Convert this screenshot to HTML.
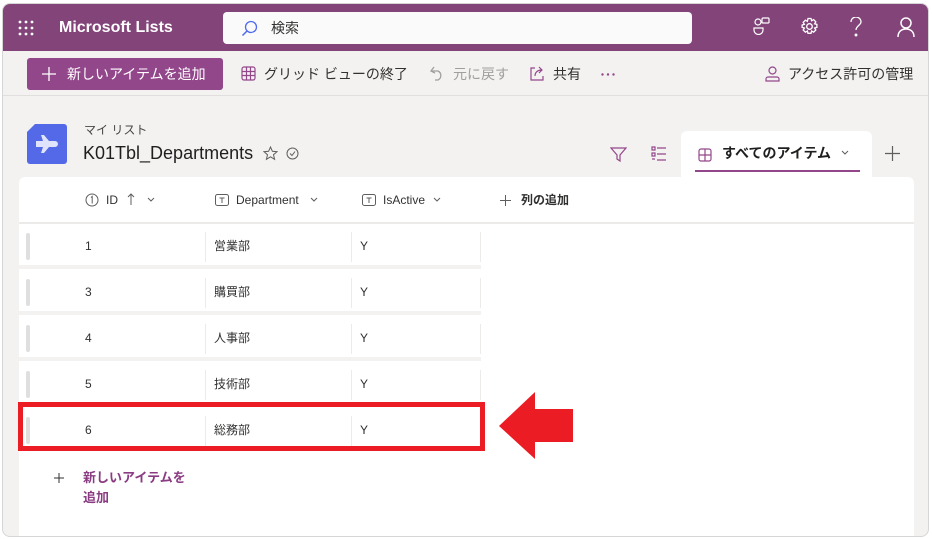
<!DOCTYPE html>
<html><head><meta charset="utf-8"><style>
*{box-sizing:border-box;margin:0;padding:0}
body{width:932px;height:539px;background:#fff;font-family:"Segoe UI","Liberation Sans","Noto Sans CJK JP",sans-serif;position:relative;overflow:hidden;color:#323130}
.win{position:absolute;left:2px;top:3px;width:927px;height:534px;background:#f3f2f1;border:1px solid #d6d6d6;border-radius:8px;overflow:hidden}
.top{position:absolute;left:0;top:0;width:100%;height:47px;background:#834479}
.a{position:absolute;white-space:nowrap}
.search{position:absolute;left:220px;top:8px;width:469px;height:32px;background:#fafafa;border-radius:4px}
.btn{position:absolute;left:24px;top:54px;width:196px;height:32px;background:#93478b;border-radius:3px;color:#fff;font-size:14px}
.cmd{font-size:14px;color:#323130;line-height:20px}
.card{position:absolute;left:16px;top:173px;width:895px;height:370px;background:#fff;border-radius:6px}
.hdr{font-size:12px;color:#323130;line-height:16px}
.row{position:absolute;left:0;width:462px;height:45px;border-bottom:4px solid #f3f2f1}
.row .h{position:absolute;left:7px;top:9px;width:4px;height:27px;background:#e1dfdd;border-radius:2px}
.row .c{position:absolute;font-size:12px;top:14px;line-height:16px}
.row .s{position:absolute;top:8px;width:1px;height:30px;background:#edebe9}
</style></head><body>
<div class="win">
 <div class="top">
  <svg class="a" style="left:15px;top:16px" width="16" height="16"><g fill="#fff"><circle cx="2" cy="2" r="1.4"/><circle cx="8" cy="2" r="1.4"/><circle cx="14" cy="2" r="1.4"/><circle cx="2" cy="8" r="1.4"/><circle cx="8" cy="8" r="1.4"/><circle cx="14" cy="8" r="1.4"/><circle cx="2" cy="14" r="1.4"/><circle cx="8" cy="14" r="1.4"/><circle cx="14" cy="14" r="1.4"/></g></svg>
  <div class="a" style="left:56px;top:14px;color:#fff;font-size:16px;font-weight:bold;line-height:20px">Microsoft Lists</div>
  <div class="search">
   <svg class="a" style="left:18px;top:8px" width="17" height="17"><circle cx="10" cy="7" r="5.5" fill="none" stroke="#4f6bed" stroke-width="1.3"/><path d="M6 11L1.5 15.5" stroke="#4f6bed" stroke-width="1.5"/></svg>
   <div class="a" style="left:48px;top:6px;font-size:14px;color:#323130;line-height:20px">検索</div>
  </div>
  <svg class="a" style="left:750px;top:13px" width="18" height="18" fill="none" stroke="#fff" stroke-width="1.2"><circle cx="5" cy="5" r="3"/><rect x="9" y="1" width="7" height="5" rx="1"/><path d="M1 11h9v2a4 4 0 0 1-9 0z"/></svg>
  <svg class="a" style="left:797px;top:13px" width="19" height="19" fill="none" stroke="#fff" stroke-width="1.3"><circle cx="9.5" cy="9.5" r="2.8"/><path d="M8 1.5h3l.6 2.3 2-1.2 2.2 2.2-1.2 2 2.3.6v3l-2.3.6 1.2 2-2.2 2.2-2-1.2-.6 2.3H8l-.6-2.3-2 1.2-2.2-2.2 1.2-2-2.3-.6V8l2.3-.6-1.2-2 2.2-2.2 2 1.2z"/></svg>
  <svg class="a" style="left:847px;top:13px" width="12" height="20" fill="none" stroke="#fff" stroke-width="1.3"><path d="M1 5a5 5 0 0 1 10 0c0 3-5 4-5 8"/><circle cx="6" cy="18" r=".8" fill="#fff"/></svg>
  <svg class="a" style="left:893px;top:12px" width="20" height="22" fill="none" stroke="#fff" stroke-width="1.5"><circle cx="10" cy="7" r="5"/><path d="M2 21c0-5 3-8 8-8s8 3 8 8"/></svg>
 </div>
 <div class="a" style="left:0;top:91px;width:100%;height:1px;background:#e1dfdd"></div>
 <div class="btn"><svg class="a" style="left:15px;top:9px" width="14" height="14" stroke="#fff" stroke-width="1.3"><path d="M7 0v14M0 7h14"/></svg><span class="a" style="left:40px;top:6px;line-height:20px">新しいアイテムを追加</span></div>
 <svg class="a" style="left:238px;top:62px" width="15" height="15" fill="none" stroke="#93478b" stroke-width="1.2"><rect x="1" y="1" width="13" height="13" rx="2"/><path d="M1 5.5h13M1 9.5h13M5.5 1v13M9.5 1v13"/></svg>
 <div class="a cmd" style="left:261px;top:60px">グリッド ビューの終了</div>
 <svg class="a" style="left:427px;top:62px" width="15" height="15" fill="none" stroke="#a19f9d" stroke-width="1.3"><path d="M4 1L1 5l4 2M1 5h7a5 5 0 0 1 0 9H5"/></svg>
 <div class="a cmd" style="left:450px;top:60px;color:#a19f9d">元に戻す</div>
 <svg class="a" style="left:526px;top:62px" width="15" height="15" fill="none" stroke="#93478b" stroke-width="1.2"><path d="M6 2H2v12h12v-4"/><path d="M6 10c0-4 3-6 7-6M10 1l3 3-3 3"/></svg>
 <div class="a cmd" style="left:550px;top:60px">共有</div>
 <svg class="a" style="left:598px;top:69px" width="14" height="3" fill="#93478b"><circle cx="1.5" cy="1.5" r="1.2"/><circle cx="7" cy="1.5" r="1.2"/><circle cx="12.5" cy="1.5" r="1.2"/></svg>
 <svg class="a" style="left:762px;top:62px" width="15" height="16" fill="none" stroke="#93478b" stroke-width="1.2"><circle cx="7.5" cy="4.5" r="3.5"/><path d="M1 15v-2a2 2 0 0 1 2-2h9a2 2 0 0 1 2 2v2z"/></svg>
 <div class="a cmd" style="left:785px;top:60px">アクセス許可の管理</div>

 <svg class="a" style="left:24px;top:120px" width="40" height="40"><path d="M8 0H37a3 3 0 0 1 3 3V37a3 3 0 0 1-3 3H3a3 3 0 0 1-3-3V8z" fill="#5469e8"/><path d="M9 17h7l-2-6h3l5 6h6a3 3 0 0 1 0 6h-6l-5 6h-3l2-6H9z" fill="#dfe3fb"/></svg>
 <div class="a" style="left:81px;top:118px;font-size:12px;color:#484644;line-height:16px">マイ リスト</div>
 <div class="a" style="left:80px;top:137px;font-size:18px;color:#201f1e;line-height:24px">K01Tbl_Departments</div>
 <svg class="a" style="left:260px;top:142px" width="15" height="15" fill="none" stroke="#605e5c"><path d="M7.5 1l1.9 4.3 4.6.4-3.5 3 1.1 4.6-4.1-2.5-4.1 2.5 1.1-4.6-3.5-3 4.6-.4z"/></svg>
 <svg class="a" style="left:283px;top:143px" width="13" height="13" fill="none" stroke="#605e5c"><circle cx="6.5" cy="6.5" r="5.5"/><path d="M4 6.5l2 2 3-4"/></svg>

 <svg class="a" style="left:607px;top:142px" width="17" height="17" fill="none" stroke="#93478b" stroke-width="1.2"><path d="M1 2h15l-6 7v6l-3-2V9z"/></svg>
 <svg class="a" style="left:648px;top:142px" width="16" height="16" fill="none" stroke="#93478b" stroke-width="1.2"><path d="M6 2h9M6 8h9M6 14h9M1 1h3v3H1zM1 7h3v3H1zM1 13h3"/></svg>
 <div class="a" style="left:678px;top:127px;width:191px;height:50px;background:#fff;border-radius:6px 6px 0 0"></div>
 <svg class="a" style="left:695px;top:144px" width="14" height="14" fill="none" stroke="#93478b" stroke-width="1.2"><rect x="1" y="1" width="12" height="12" rx="2"/><path d="M1 7h12M7 1v12"/></svg>
 <div class="a" style="left:719px;top:139px;font-size:14px;font-weight:bold;color:#201f1e;line-height:20px">すべてのアイテム</div>
 <svg class="a" style="left:838px;top:146px" width="8" height="5" fill="none" stroke="#605e5c"><path d="M1 1l3 3 3-3"/></svg>
 <div class="a" style="left:692px;top:166px;width:165px;height:2px;background:#93478b"></div>
 <svg class="a" style="left:882px;top:142px" width="15" height="15" stroke="#605e5c" stroke-width="1.2"><path d="M7.5 0v15M0 7.5h15"/></svg>

 <div class="card">
  <svg class="a" style="left:66px;top:16px" width="14" height="14" fill="none" stroke="#605e5c"><circle cx="7" cy="7" r="6"/><path d="M6 4.5l1.2-1V10.5"/></svg>
  <div class="a hdr" style="left:87px;top:15px">ID</div>
  <svg class="a" style="left:108px;top:16px" width="8" height="12" fill="none" stroke="#605e5c"><path d="M4 12V1M1 4l3-3 3 3"/></svg>
  <svg class="a" style="left:128px;top:20px" width="8" height="5" fill="none" stroke="#605e5c"><path d="M1 1l3 3 3-3"/></svg>
  <svg class="a" style="left:196px;top:17px" width="14" height="12" fill="none" stroke="#605e5c"><rect x=".5" y=".5" width="13" height="11" rx="2"/><path d="M4.5 4h5M7 4v5"/></svg>
  <div class="a hdr" style="left:217px;top:15px">Department</div>
  <svg class="a" style="left:291px;top:20px" width="8" height="5" fill="none" stroke="#605e5c"><path d="M1 1l3 3 3-3"/></svg>
  <svg class="a" style="left:343px;top:17px" width="14" height="12" fill="none" stroke="#605e5c"><rect x=".5" y=".5" width="13" height="11" rx="2"/><path d="M4.5 4h5M7 4v5"/></svg>
  <div class="a hdr" style="left:364px;top:15px">IsActive</div>
  <svg class="a" style="left:414px;top:20px" width="8" height="5" fill="none" stroke="#605e5c"><path d="M1 1l3 3 3-3"/></svg>
  <svg class="a" style="left:481px;top:18px" width="11" height="11" stroke="#605e5c"><path d="M5.5 0v11M0 5.5h11"/></svg>
  <div class="a hdr" style="left:502px;top:15px;font-weight:bold">列の追加</div>
  <div class="a" style="left:0;top:45px;width:895px;height:2px;background:#edebe9"></div>

  <div class="row" style="top:47px"><div class="h"></div><div class="c" style="left:66px">1</div><div class="s" style="left:186px"></div><div class="c" style="left:195px">営業部</div><div class="s" style="left:332px"></div><div class="c" style="left:341px">Y</div><div class="s" style="left:461px"></div></div>
  <div class="row" style="top:93px"><div class="h"></div><div class="c" style="left:66px">3</div><div class="s" style="left:186px"></div><div class="c" style="left:195px">購買部</div><div class="s" style="left:332px"></div><div class="c" style="left:341px">Y</div><div class="s" style="left:461px"></div></div>
  <div class="row" style="top:139px"><div class="h"></div><div class="c" style="left:66px">4</div><div class="s" style="left:186px"></div><div class="c" style="left:195px">人事部</div><div class="s" style="left:332px"></div><div class="c" style="left:341px">Y</div><div class="s" style="left:461px"></div></div>
  <div class="row" style="top:185px"><div class="h"></div><div class="c" style="left:66px">5</div><div class="s" style="left:186px"></div><div class="c" style="left:195px">技術部</div><div class="s" style="left:332px"></div><div class="c" style="left:341px">Y</div><div class="s" style="left:461px"></div></div>
  <div class="row" style="top:231px;border-bottom:none"><div class="h"></div><div class="c" style="left:66px">6</div><div class="s" style="left:186px"></div><div class="c" style="left:195px">総務部</div><div class="s" style="left:332px"></div><div class="c" style="left:341px">Y</div></div>

  <svg class="a" style="left:35px;top:296px" width="10" height="10" stroke="#323130"><path d="M5 0v10M0 5h10"/></svg>
  <div class="a" style="left:64px;top:291px;font-size:13px;font-weight:bold;color:#8a3b82;line-height:20px">新しいアイテムを<br>追加</div>
 </div>
</div>
<div class="a" style="left:18px;top:402px;width:467px;height:49px;border:5px solid #ec1c24"></div>
<svg class="a" style="left:499px;top:392px" width="75" height="68"><path d="M0 34L36 0V17H74V50H36V67z" fill="#ec1c24"/></svg>
</body></html>
